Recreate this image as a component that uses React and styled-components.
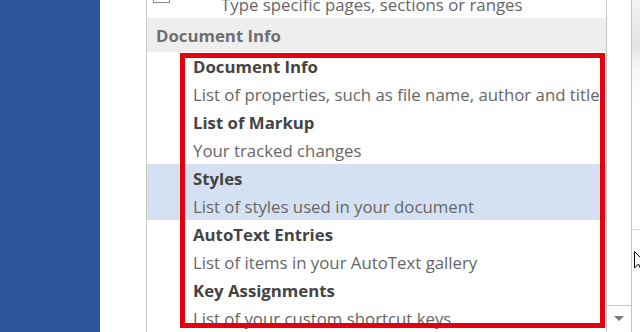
import React from "react"
import styled, { createGlobalStyle } from "styled-components"

const GlobalStyle = createGlobalStyle`
  html, body {
    margin: 0;
    padding: 0;
    background: #ffffff;
    overflow: hidden;
  }
  body {
    font-family: "Open Sans", "Noto Sans", "Liberation Sans", sans-serif;
  }
`

const Page = styled.div`
  display: flex;
  width: 640px;
  height: 332px;
  overflow: hidden;
`

const BlueRail = styled.div`
  width: 100px;
  flex: none;
  background: #2b579a;
`

const Gutter = styled.div`
  width: 46px;
  flex: none;
  background: #ffffff;
`

const Dropdown = styled.div`
  position: relative;
  width: 459px;
  flex: none;
  display: flex;
  flex-direction: column;
  border-left: 1px solid #c6c6c6;
  border-right: 1px solid #c6c6c6;
  overflow: hidden;
`

const PartialRow = styled.div`
  height: 18px;
  flex: none;
  display: flex;
  align-items: flex-end;
  overflow: hidden;
`

const Checkbox = styled.span`
  width: 15px;
  height: 15px;
  flex: none;
  margin: 0 0 15px 6px;
  border: 1px solid #8a8a8a;
  background: #ffffff;
`

const PartialText = styled.span`
  margin-left: 51px;
  font-size: 16.8px;
  line-height: 28px;
  margin-bottom: -1px;
  color: #666666;
  white-space: nowrap;
`

const SectionHeader = styled.div`
  height: 34px;
  flex: none;
  padding-left: 9px;
  background: #eeeeee;
  font-size: 16.8px;
  font-weight: 700;
  line-height: 35px;
  color: #6f6f6f;
`

const Item = styled.div`
  height: 56px;
  flex: none;
  box-sizing: border-box;
  padding: 1px 0 0 46px;
  background: ${props => (props.selected ? "#d5e1f2" : "transparent")};
  overflow: hidden;
`

const Title = styled.div`
  font-size: 16.8px;
  font-weight: 700;
  line-height: 28px;
  color: #444444;
  white-space: nowrap;
`

const Desc = styled.div`
  font-size: 16.8px;
  line-height: 28px;
  color: #666666;
  white-space: nowrap;
`

const Highlight = styled.div`
  position: absolute;
  left: 33px;
  top: 53px;
  width: 415px;
  height: 265px;
  border: 5px solid #e3000f;
  pointer-events: none;
`

const Scrollbar = styled.div`
  width: 24px;
  flex: none;
  display: flex;
  flex-direction: column;
  justify-content: flex-end;
  border-right: 1px solid #c6c6c6;
`

const ScrollButton = styled.div`
  height: 26px;
  display: flex;
  align-items: center;
  justify-content: center;
  border-top: 1px solid #c6c6c6;
`

const Beyond = styled.div`
  position: relative;
  flex: 1;
  display: flex;
  flex-direction: column;
  background: #ffffff;
`

const BeyondTop = styled.div`
  height: 229px;
  background: linear-gradient(160deg, #f4f4f4 0%, #e4e4e4 20%, #f6f6f6 30%, #ffffff 45%);
  border-bottom: 1px solid #d8d8d8;
`

const Cursor = styled.svg`
  position: absolute;
  left: 2px;
  top: 251px;
`

const items = [
  { title: "Document Info", desc: "List of properties, such as file name, author and title" },
  { title: "List of Markup", desc: "Your tracked changes" },
  { title: "Styles", desc: "List of styles used in your document", selected: true },
  { title: "AutoText Entries", desc: "List of items in your AutoText gallery" },
  { title: "Key Assignments", desc: "List of your custom shortcut keys" },
]

const App = () => {
  return (
    <>
      <GlobalStyle />
      <Page>
        <BlueRail />
        <Gutter />
        <Dropdown>
          <PartialRow>
            <Checkbox />
            <PartialText>Type specific pages, sections or ranges</PartialText>
          </PartialRow>
          <SectionHeader>Document Info</SectionHeader>
          {items.map(item => (
            <Item key={item.title} selected={item.selected}>
              <Title>{item.title}</Title>
              <Desc>{item.desc}</Desc>
            </Item>
          ))}
          <Highlight />
        </Dropdown>
        <Scrollbar>
          <ScrollButton>
            <svg width="10" height="6" viewBox="0 0 10 6">
              <path d="M0 0 H10 L5 5 Z" fill="#7a7a7a" />
            </svg>
          </ScrollButton>
        </Scrollbar>
        <Beyond>
          <BeyondTop />
          <Cursor width="12" height="22" viewBox="0 0 12 22">
            <path d="M0.5 0.5 V17 L4.5 13 L7.5 20 L10 19 L7 12 H12 Z" fill="#ffffff" stroke="#000000" strokeWidth="1" />
          </Cursor>
        </Beyond>
      </Page>
    </>
  )
}

export default App
